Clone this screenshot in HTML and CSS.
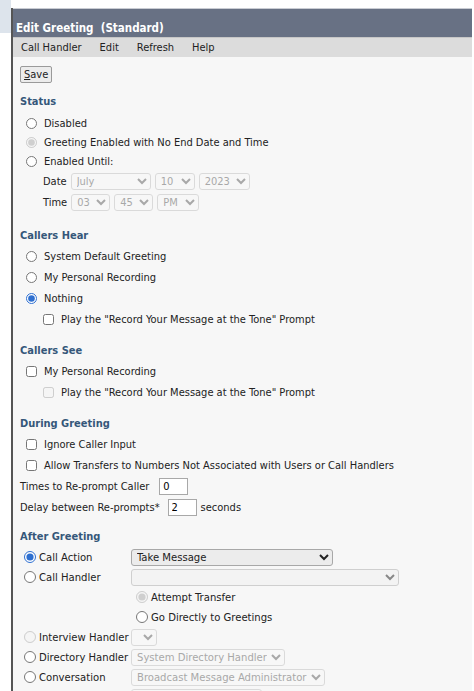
FILE: index.html
```html
<!DOCTYPE html>
<html lang="en">
<head>
    <meta charset="UTF-8">
    <title>Edit Greeting (Standard)</title>
    <link rel="stylesheet" href="styles.css">
</head>
<body>
    <div class="edge"><div class="edge-top"></div></div>
    <div class="page">
        <div class="title-bar">Edit Greeting&nbsp; (Standard)</div>
        <div class="menu-bar">
            <span>Call Handler</span>
            <span>Edit</span>
            <span>Refresh</span>
            <span>Help</span>
        </div>

        <div class="content">
            <button class="save-btn"><u>S</u>ave</button>

            <!-- Status -->
            <div class="section-title first">Status</div>
            <div class="status-list">
                <label class="row tight"><input type="radio" name="status"> Disabled</label>
                <label class="row tight"><input type="radio" name="status" checked disabled> Greeting Enabled with No End Date and Time</label>
                <label class="row tight"><input type="radio" name="status"> Enabled Until:</label>
                <div class="row indent">
                    <span class="field-label">Date</span>
                    <select disabled class="sel-month"><option>July</option></select>
                    <select disabled class="sel-day"><option>10</option></select>
                    <select disabled class="sel-year"><option>2023</option></select>
                </div>
                <div class="row indent">
                    <span class="field-label">Time</span>
                    <select disabled class="sel-small"><option>03</option></select>
                    <select disabled class="sel-small"><option>45</option></select>
                    <select disabled class="sel-small sel-ampm"><option>PM</option></select>
                </div>
            </div>

            <!-- Callers Hear -->
            <div class="section-title">Callers Hear</div>
            <label class="row"><input type="radio" name="hear"> System Default Greeting</label>
            <label class="row"><input type="radio" name="hear"> My Personal Recording</label>
            <label class="row"><input type="radio" name="hear" checked> Nothing</label>
            <label class="row sub"><input type="checkbox"> Play the "Record Your Message at the Tone" Prompt</label>

            <!-- Callers See -->
            <div class="section-title">Callers See</div>
            <label class="row"><input type="checkbox"> My Personal Recording</label>
            <label class="row sub"><input type="checkbox" disabled> Play the "Record Your Message at the Tone" Prompt</label>

            <!-- During Greeting -->
            <div class="section-title">During Greeting</div>
            <label class="row"><input type="checkbox"> Ignore Caller Input</label>
            <label class="row"><input type="checkbox"> Allow Transfers to Numbers Not Associated with Users or Call Handlers</label>
            <div class="row flush">Times to Re-prompt Caller <input type="text" class="num num-times" value="0"></div>
            <div class="row flush">Delay between Re-prompts* <input type="text" class="num num-delay" value="2"> seconds</div>

            <!-- After Greeting -->
            <div class="section-title after-title">After Greeting</div>
            <div class="after">
                <label class="arow"><input type="radio" name="after" checked> Call Action</label>
                <div><select class="sel-action"><option>Take Message</option></select></div>

                <label class="arow"><input type="radio" name="after"> Call Handler</label>
                <div><select class="sel-handler"><option></option></select></div>

                <div></div>
                <label class="arow xfer"><input type="radio" name="xfer" checked disabled> Attempt Transfer</label>
                <div></div>
                <label class="arow xfer"><input type="radio" name="xfer"> Go Directly to Greetings</label>

                <label class="arow"><input type="radio" name="after" disabled> Interview Handler</label>
                <div><select disabled class="sel-tiny"><option></option></select></div>

                <label class="arow"><input type="radio" name="after"> Directory Handler</label>
                <div><select disabled><option>System Directory Handler</option></select></div>

                <label class="arow"><input type="radio" name="after"> Conversation</label>
                <div><select disabled><option>Broadcast Message Administrator</option></select></div>

                <div></div>
                <div><select disabled class="sel-last"><option></option></select></div>
            </div>
        </div>
    </div>
</body>
</html>
```

FILE: styles.css
```css
* {
    box-sizing: border-box;
}

body {
    margin: 0;
    display: flex;
    height: 691px;
    overflow: hidden;
    background: #fff;
    font-family: "DejaVu Sans Condensed", "DejaVu Sans", sans-serif;
    font-size: 11px;
    color: #222;
}

/* left strip from the window behind */
.edge {
    width: 11px;
    flex: none;
}

.edge-top {
    height: 33px;
    background: #dde4ec;
}

.page {
    flex: 1;
    margin-top: 8px;
    margin-right: 2px;
    border-left: 2px solid #555;
    background: #f7f7f7;
}

.title-bar {
    height: 29px;
    display: flex;
    align-items: center;
    padding: 10px 0 0 3px;
    background: #687184;
    color: #fff;
    font-weight: bold;
    font-size: 11.5px;
    border-top: 1px solid #c9ccd3;
}

.menu-bar {
    height: 20px;
    line-height: 20px;
    padding-left: 8px;
    background: #dcdcdc;
    border-top: 1px solid #c7c7c7;
    display: flex;
    gap: 18px;
}

.content {
    padding: 9px 7px 0;
}

.save-btn {
    font-family: inherit;
    font-size: 11px;
    height: 17px;
    padding: 0 3px;
    border: 1px solid #9a9a9a;
    border-radius: 2px;
    background: #ececec;
    color: #222;
}

.section-title {
    color: #35577a;
    font-weight: bold;
    height: 21px;
    line-height: 21px;
    margin-top: 10px;
}

.section-title.first {
    margin-top: 8px;
}

.status-list {
    padding-top: 2px;
    padding-bottom: 2px;
}

.row {
    display: flex;
    align-items: center;
    height: 21px;
    padding-left: 3px;
    white-space: nowrap;
}

.row.tight {
    height: 19px;
}

.row input[type=radio],
.row input[type=checkbox] {
    width: 11px;
    height: 11px;
    margin: 0 7px 0 3px;
    accent-color: #2e6fd0;
}

.row.sub {
    padding-left: 20px;
}

.row.flush {
    padding-left: 0;
}

.row.indent {
    padding-left: 23px;
    gap: 4px;
}

select {
    font-family: inherit;
    font-size: 11px;
    height: 17px;
    color: #888;
    background: #f7f7f7;
    border: 1px solid #cfcfcf;
    border-radius: 3px;
    padding: 0 1px;
}

.sel-month { width: 80px; }
.sel-day { width: 40px; }
.sel-year { width: 51px; }
.sel-small { width: 39px; }
.sel-ampm { width: 42px; }

.num {
    font-family: inherit;
    font-size: 11px;
    width: 29px;
    height: 17px;
    margin: 0 4px;
    border: 1px solid #a8a8a8;
    background: #fff;
    padding: 0 3px;
}

.num-times { margin-left: 10px; }
.num-delay { margin-left: 8px; }

.after-title {
    margin-top: 8px;
}

/* After Greeting block is drawn a bit larger */
.after {
    display: grid;
    grid-template-columns: 111px auto;
    grid-auto-rows: 20px;
    align-items: center;
    font-size: 11.2px;
}

.arow {
    display: flex;
    align-items: center;
    white-space: nowrap;
}

.arow input {
    width: 12px;
    height: 12px;
    margin: 0 3px 0 4px;
    accent-color: #2e6fd0;
}

.arow.xfer input {
    margin-left: 5px;
}

.after select {
    font-size: 11.2px;
    height: 17px;
}

.after .sel-action {
    width: 202px;
    color: #222;
    background: #ececec;
    border-color: #a8a8a8;
}

.after .sel-handler {
    width: 268px;
    background: #f3f3f3;
}

.after .sel-tiny { width: 26px; }
.after .sel-last { width: 131px; }
```
